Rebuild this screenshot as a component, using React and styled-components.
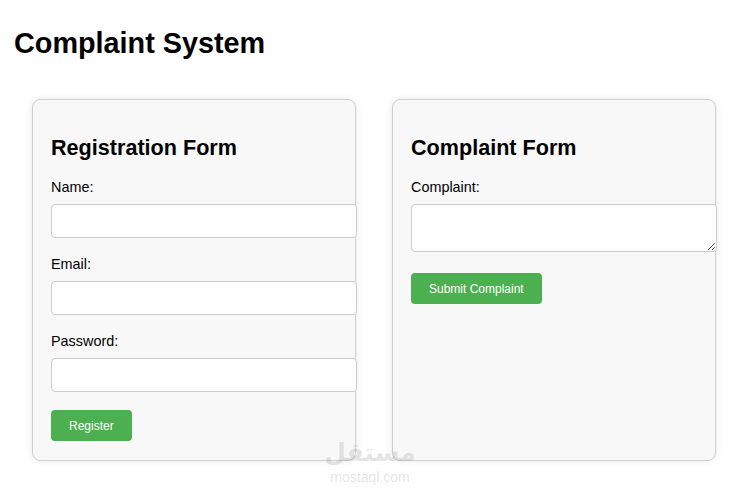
import React from "react";
import styled, { createGlobalStyle } from "styled-components";

const Global = createGlobalStyle`
  html, body { margin: 0; padding: 0; background: #fff; }
  body { font-family: "Liberation Sans", Arial, sans-serif; color: #000; }
  * { box-sizing: content-box; }
`;

const Page = styled.div`
  position: relative;
  width: 742px;
  height: 494px;
  overflow: hidden;
  padding: 0;
`;

const Title = styled.h1`
  font-size: 28.8px;
  font-weight: bold;
  line-height: 33px;
  margin: 27px 0 0 14px;
`;

const Row = styled.div`
  display: flex;
  gap: 36px;
  margin: 39px 0 0 32px;
`;

const Card = styled.section`
  width: 286px;
  min-height: 324px;
  padding: 18px;
  background: #f8f8f8;
  border: 1px solid #cfcfcf;
  border-radius: 8px;
  box-shadow: 0 0 9px rgba(0, 0, 0, 0.08);
`;

const CardTitle = styled.h2`
  font-size: 21.6px;
  font-weight: bold;
  line-height: 25px;
  margin: 17px 0 19px 0;
`;

const Label = styled.label`
  display: block;
  font-size: 14.4px;
  line-height: 16.5px;
  margin-bottom: 8.5px;
`;

const Input = styled.input`
  display: block;
  width: 286px;
  height: 14px;
  padding: 9px;
  margin: 0 0 18px 0;
  font-family: "Liberation Sans", Arial, sans-serif;
  font-size: 12px;
  background: #fff;
  border: 1px solid #cccccc;
  border-radius: 4px;
  outline: none;
`;

const TextArea = styled.textarea`
  display: block;
  width: 286px;
  height: 28px;
  padding: 9px;
  margin: 0 0 21px 0;
  font-family: "Liberation Sans", Arial, sans-serif;
  font-size: 12px;
  background: #fff;
  border: 1px solid #cccccc;
  border-radius: 4px;
  outline: none;
`;

const Button = styled.button`
  display: block;
  padding: 0 18px;
  height: 31px;
  font-family: "Liberation Sans", Arial, sans-serif;
  font-size: 12px;
  color: #fff;
  background: #4caf50;
  border: none;
  border-radius: 4px;
  cursor: pointer;
`;

const Watermark = styled.div`
  position: absolute;
  left: 300px;
  top: 438px;
  width: 140px;
  text-align: center;
  color: rgba(120, 120, 120, 0.2);
  pointer-events: none;
`;

const WmArabic = styled.div`
  font-family: "DejaVu Sans", "Noto Sans", sans-serif;
  font-weight: bold;
  font-size: 25px;
  line-height: 30px;
`;

const WmLatin = styled.div`
  font-family: "Liberation Sans", Arial, sans-serif;
  font-size: 14px;
  line-height: 16px;
  margin-top: 1px;
`;

export default function App() {
  return (
    <Page>
      <Global />
      <Title>Complaint System</Title>
      <Row>
        <Card>
          <CardTitle>Registration Form</CardTitle>
          <Label htmlFor="name">Name:</Label>
          <Input id="name" type="text" />
          <Label htmlFor="email">Email:</Label>
          <Input id="email" type="email" />
          <Label htmlFor="password">Password:</Label>
          <Input id="password" type="password" />
          <Button>Register</Button>
        </Card>
        <Card>
          <CardTitle>Complaint Form</CardTitle>
          <Label htmlFor="complaint">Complaint:</Label>
          <TextArea id="complaint" />
          <Button>Submit Complaint</Button>
        </Card>
      </Row>
      <Watermark>
        <WmArabic>مستقل</WmArabic>
        <WmLatin>mostaql.com</WmLatin>
      </Watermark>
    </Page>
  );
}
